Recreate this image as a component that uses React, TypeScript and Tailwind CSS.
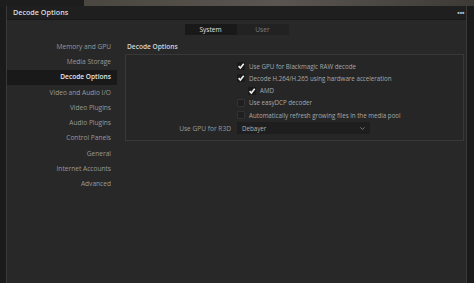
import { ChevronDown } from "lucide-react";

const sections = [
  "Memory and GPU",
  "Media Storage",
  "Decode Options",
  "Video and Audio I/O",
  "Video Plugins",
  "Audio Plugins",
  "Control Panels",
  "General",
  "Internet Accounts",
  "Advanced",
];

function Check({ on }: { on: boolean }) {
  return (
    <span
      className={`flex h-[8px] w-[8px] shrink-0 items-center justify-center rounded-[1px] ${
        on ? "bg-[#1a1a1a]" : "bg-[#1f1f1f] border border-[#333]"
      }`}
    >
      {on && (
        <svg viewBox="0 0 10 10" className="h-[8px] w-[8px]">
          <path d="M2 5.2 L4.2 7.6 L8.4 2.2" fill="none" stroke="#f2f2f2" strokeWidth="2" />
        </svg>
      )}
    </span>
  );
}

function Row({ on, label, indent }: { on: boolean; label: string; indent?: boolean }) {
  return (
    <div className={`flex h-[12.3px] items-center gap-[4px] ${indent ? "pl-[11px]" : ""}`}>
      <Check on={on} />
      <span className="whitespace-nowrap text-[#a8a8a8]">{label}</span>
    </div>
  );
}

export default function App() {
  return (
    <div
      className="relative h-[283px] w-[474px] overflow-hidden bg-[#1c1c1c] text-[6.6px]"
      style={{ fontFamily: '"Open Sans", "Noto Sans", sans-serif' }}
    >
      {/* backdrop strip above the dialog */}
      <div className="flex h-[6px]">
        <div className="w-[84px] bg-[#1d1d1d]" />
        <div className="flex-1 bg-gradient-to-r from-[#4a4640] via-[#5a5550] to-[#3e3b37]" />
      </div>

      <div className="flex h-[277px]">
        <div className="w-[7px] bg-[#1b1b1b] border-r border-[#3a3a3a]" />
        {/* dialog */}
        <div className="flex w-[459px] flex-col bg-[#282828]">
          <div className="flex h-[14px] items-center justify-between bg-[#1f1f1f] pl-[6px] pr-[2px] border-b border-[#181818]">
            <span className="text-[7.2px] font-semibold text-[#dcdcdc]">Decode Options</span>
            <span className="text-[9px] leading-none tracking-[-1px] text-[#bdbdbd]">•••</span>
          </div>

          <div className="flex justify-center pt-[4px]">
            <div className="flex h-[11px] w-[104px] overflow-hidden rounded-[1px] bg-[#222]">
              <div className="flex flex-1 items-center justify-center bg-[#191919] text-[#e0e0e0]">System</div>
              <div className="flex flex-1 items-center justify-center text-[#7d7d7d]">User</div>
            </div>
          </div>

          <div className="flex flex-1 pt-[4px]">
            <div className="flex w-[110px] flex-col">
              {sections.map((s) => (
                <div
                  key={s}
                  className={`flex h-[15.3px] items-center justify-end pr-[6px] whitespace-nowrap ${
                    s === "Decode Options" ? "bg-[#191919] font-semibold text-[#e6e6e6]" : "text-[#9a9a9a]"
                  }`}
                >
                  {s}
                </div>
              ))}
            </div>

            <div className="flex flex-1 flex-col pl-[8px] pr-[2px]">
              <div className="flex h-[15px] items-center pl-[2px] font-semibold text-[#d6d6d6]">Decode Options</div>
              <div className="flex h-[87px] flex-col border border-[#383838] bg-[#262626] pt-[5px] text-[6.2px]">
                <div className="flex flex-col pl-[111px]">
                  <Row on label="Use GPU for Blackmagic RAW decode" />
                  <Row on label="Decode H.264/H.265 using hardware acceleration" />
                  <Row on indent label="AMD" />
                  <Row on={false} label="Use easyDCP decoder" />
                  <Row on={false} label="Automatically refresh growing files in the media pool" />
                </div>
                <div className="mt-[1px] flex items-center">
                  <span className="w-[111px] pr-[6px] text-right text-[6.6px] text-[#9a9a9a]">Use GPU for R3D</span>
                  <div className="flex h-[12px] w-[133px] items-center justify-between bg-[#1e1e1e] pl-[5px] pr-[4px] text-[#b0b0b0]">
                    <span>Debayer</span>
                    <ChevronDown size={7} strokeWidth={2.5} className="text-[#9a9a9a]" />
                  </div>
                </div>
              </div>
            </div>
          </div>
        </div>
        <div className="flex-1 border-l border-[#3a3a3a] bg-[#1a1a1a]" />
      </div>
    </div>
  );
}
